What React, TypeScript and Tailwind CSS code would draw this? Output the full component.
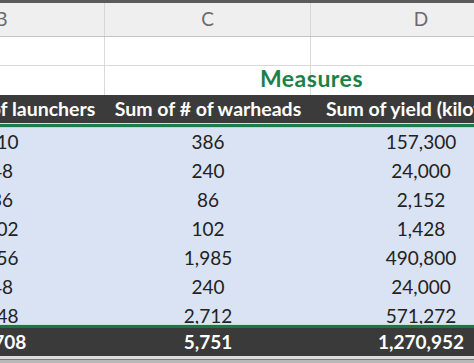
const rows = [
  { b: '510', c: '386', d: '157,300' },
  { b: '48', c: '240', d: '24,000' },
  { b: '36', c: '86', d: '2,152' },
  { b: '102', c: '102', d: '1,428' },
  { b: '456', c: '1,985', d: '490,800' },
  { b: '48', c: '240', d: '24,000' },
  { b: '448', c: '2,712', d: '571,272' },
]

const grid = 'grid grid-cols-[206px_206px_220px] -ml-[101px] w-[632px]'

const App = () => {
  return (
    <div
      className="w-[474px] h-[363px] overflow-hidden bg-white flex flex-col"
      style={{ fontFamily: 'Lato, "Open Sans", sans-serif' }}
    >
      <div className="h-[3px] bg-[#5b5b5b]" />

      {/* column letters */}
      <div className={`${grid} h-[34px] bg-[#efefef] border-b border-[#c4c4c4] text-[19px] text-[#6b6b6b]`}>
        <div className="flex items-center justify-center border-r border-[#d6d6d6]">B</div>
        <div className="flex items-center justify-center border-r border-[#d6d6d6]">C</div>
        <div className="flex items-center justify-center">D</div>
      </div>

      <div className={`${grid} h-[29px] border-b border-[#d9d9d9]`}>
        <div className="border-r border-[#d9d9d9]" />
        <div className="border-r border-[#d9d9d9]" />
        <div />
      </div>

      <div className={`${grid} h-[29px]`}>
        <div className="border-r border-[#d9d9d9]" />
        <div className="border-r border-[#d9d9d9] flex items-center justify-end">
          <span className="relative z-10 -mr-[53px] -mt-[5px] text-[23px] font-bold text-[#1d8048] tracking-[0.5px]">
            Measures
          </span>
        </div>
        <div />
      </div>

      {/* pivot header */}
      <div className={`${grid} h-[28px] bg-[#3b3b3b] text-white font-bold text-[19.5px] whitespace-nowrap`}>
        <div className="flex items-center justify-center overflow-hidden">Sum of # of launchers</div>
        <div className="flex items-center justify-center overflow-hidden">Sum of # of warheads</div>
        <div className="flex items-center justify-center overflow-hidden">Sum of yield (kilotons)</div>
      </div>
      <div className="h-[1px] bg-[#cfe6d8]" />
      <div className="h-[3px] bg-[#227a4c]" />
      <div className="h-[1px] bg-[#b9dcc8]" />

      <div className="bg-[#dae3f3] text-[#222] text-[19px]">
        {rows.map((r, i) => (
          <div key={i} className={`${grid} ${i === 6 ? 'h-[22px] items-start' : 'h-[29px] items-center'}`}>
            <div className={`flex justify-center ${i === 6 ? 'pt-[3px] leading-[22px]' : ''}`}>{r.b}</div>
            <div className={`flex justify-center ${i === 6 ? 'pt-[3px] leading-[22px]' : ''}`}>{r.c}</div>
            <div className={`flex justify-center ${i === 6 ? 'pt-[3px] leading-[22px]' : ''}`}>{r.d}</div>
          </div>
        ))}
      </div>
      <div className="h-[1px] bg-[#c6e3d2]" />
      <div className="h-[3px] bg-[#217346]" />

      {/* grand total */}
      <div className={`${grid} h-[28px] bg-[#3a3a3a] text-white font-bold text-[19px]`}>
        <div className="flex items-center justify-center">1,708</div>
        <div className="flex items-center justify-center">5,751</div>
        <div className="flex items-center justify-center">1,270,952</div>
      </div>
      <div className="h-[3px] bg-[#dcdcdc]" />
      <div className="h-[1px] bg-[#7a7a7a]" />
      <div className="flex-1 bg-[#b8b8b8]" />
    </div>
  )
}

export default App
